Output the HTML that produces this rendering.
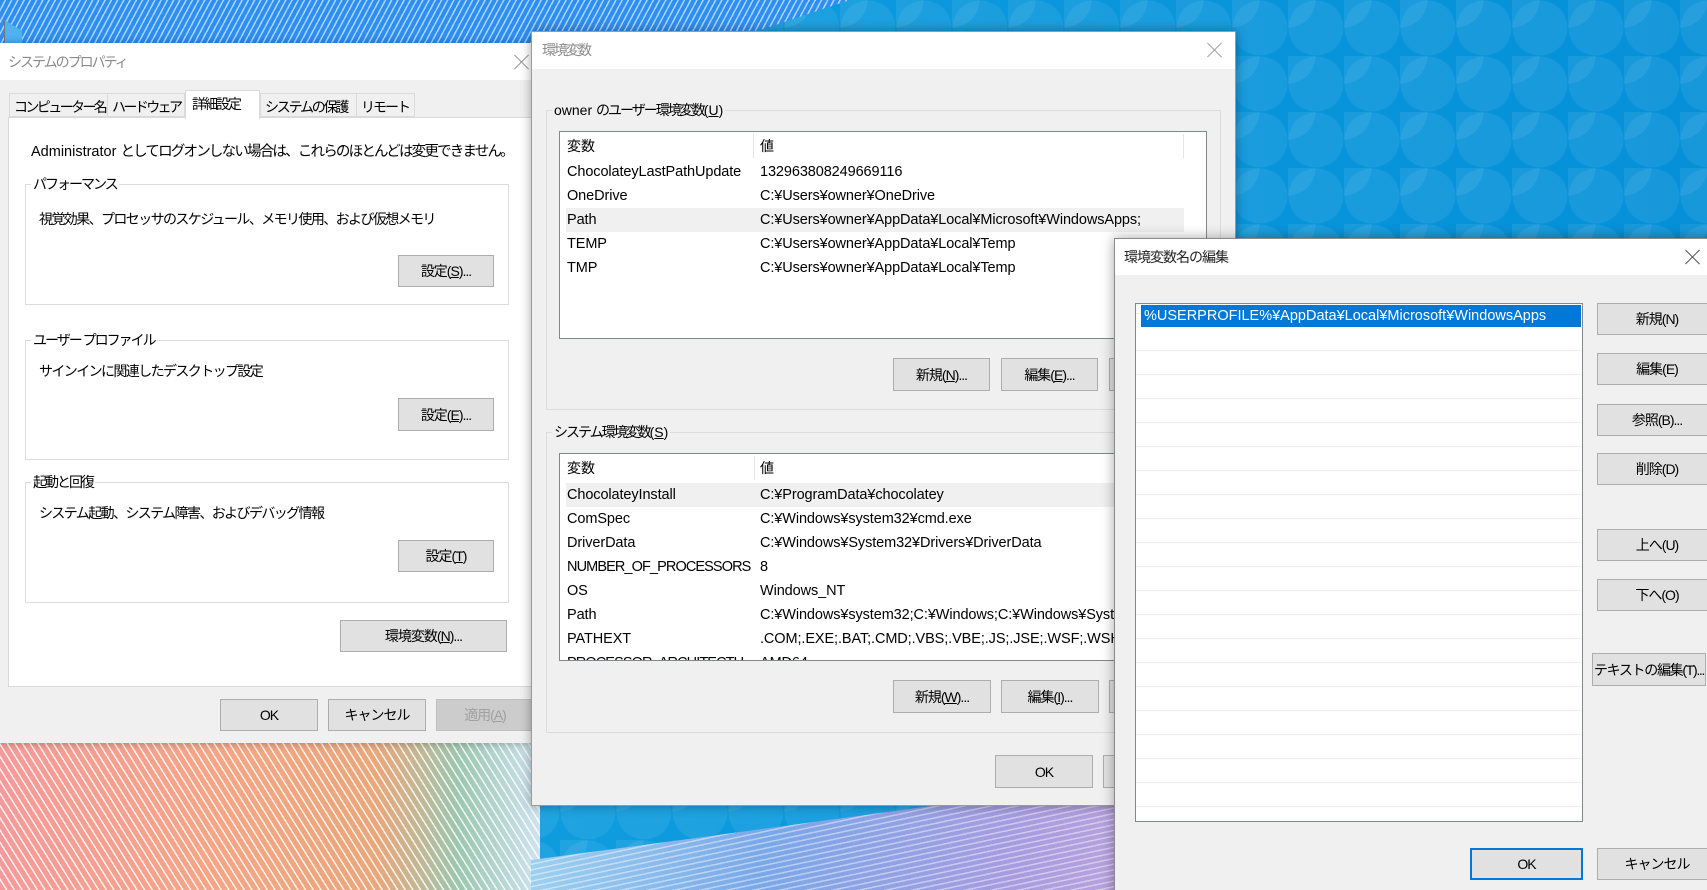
<!DOCTYPE html>
<html><head><meta charset="utf-8">
<style>
*{box-sizing:border-box;margin:0;padding:0}
html,body{width:1707px;height:890px;overflow:hidden}
body{position:relative;background:#139fe0;font-family:"Liberation Sans","Noto Sans CJK JP",sans-serif;font-size:14px;color:#000}
.a{position:absolute;white-space:nowrap}
.j{letter-spacing:-2px}
.btn{position:absolute;background:#e1e1e1;border:1px solid #adadad;display:flex;align-items:center;justify-content:center;font-size:14px;white-space:nowrap}
.btn span{letter-spacing:-1px}
.grp{position:absolute;border:1px solid #dcdcdc}
.lbl{position:absolute;padding:0 2px;line-height:18px}
.row{position:absolute;height:24px;line-height:24px;font-size:14.5px;letter-spacing:-.1px}
.x{position:absolute;width:16px;height:16px}
.x:before,.x:after{content:"";position:absolute;left:7px;top:-2px;width:1.2px;height:20px;background:#555}
.x:before{transform:rotate(45deg)}.x:after{transform:rotate(-45deg)}
</style></head><body>
<div class="a" style="left:0;top:0;width:1707px;height:890px;background:radial-gradient(circle at 28px 28px,rgba(255,255,255,.07) 0 27px,transparent 28px),radial-gradient(circle at 0 0,rgba(255,255,255,.07) 0 27px,transparent 28px),linear-gradient(90deg,#12a2e2,#0590d8);background-size:56px 56px,56px 56px,auto"></div>
<div class="a" style="left:0;top:0;width:900px;height:50px;clip-path:polygon(0 0,850px 0,700px 50px,0 50px);background:repeating-linear-gradient(-62deg,#2f8ff0 0 4px,#a8d4ff 4px 5.5px)"></div>
<div class="a" style="left:4px;top:20px;width:18px;height:24px;background:#4fb3f2;border-left:1px solid #777;clip-path:polygon(0 0,100% 45%,100% 100%,0 100%)"></div>
<div class="a" style="left:0;top:740px;width:540px;height:150px;background:repeating-linear-gradient(58deg,transparent 0 5px,rgba(255,255,255,.85) 5px 6.5px),linear-gradient(90deg,#f59a9a,#f5a585 40%,#e9a77a 70%,#9cc7b0 85%,#cfe3f0)"></div>
<div class="a" style="left:531px;top:800px;width:590px;height:90px;background:repeating-linear-gradient(-12deg,transparent 0 4px,rgba(255,255,255,.45) 4px 5.5px),linear-gradient(100deg,#9fd2f0,#7aa8e8 40%,#a69ce0 80%,#b8a2dc);clip-path:polygon(0 60px,150px 40px,400px 6px,590px 0,590px 90px,0 90px)"></div>

<div class="a" style="left:0;top:43px;width:535px;height:700px;background:#f0f0f0;box-shadow:0 0 8px rgba(0,0,0,.3)">
 <div class="a" style="left:0;top:0;width:535px;height:37px;background:#fff"></div>
 <div class="a j" style="left:8px;top:9px;color:#8a8a8a">システムのプロパティ</div>
 <div class="x" style="left:514px;top:11px;opacity:.6"></div>
 <div class="a j" style="left:9px;top:50px;width:99px;height:24px;border:1px solid #dadada;background:#f0f0f0;padding:3px 4px;letter-spacing:-2.6px">コンピューター名</div>
 <div class="a j" style="left:108px;top:50px;width:77px;height:24px;border:1px solid #dadada;border-left:0;background:#f0f0f0;padding:3px 4px;letter-spacing:-2.6px">ハードウェア</div>
 <div class="a j" style="left:260px;top:50px;width:97px;height:24px;border:1px solid #dadada;background:#f0f0f0;padding:3px 4px;letter-spacing:-2.2px">システムの保護</div>
 <div class="a j" style="left:357px;top:50px;width:58px;height:24px;border:1px solid #dadada;border-left:0;background:#f0f0f0;padding:3px 4px">リモート</div>
 <div class="a" style="left:8px;top:74px;width:540px;height:570px;background:#fff;border:1px solid #dadada"></div>
 <div class="a j" style="left:185px;top:47px;width:75px;height:29px;border:1px solid #dadada;border-bottom:0;background:#fff;padding:3px 6px">詳細設定</div>
 <div class="a" style="left:31px;top:97px;font-size:14.5px">Administrator <span style="letter-spacing:-1.8px">としてログオンしない場合は、これらのほとんどは変更できません。</span></div>
 <div class="grp" style="left:25px;top:141px;width:484px;height:121px"></div>
 <div class="lbl j" style="left:31px;top:132px;background:#fff">パフォーマンス</div>
 <div class="a j" style="left:39px;top:166px;letter-spacing:-1.6px">視覚効果、プロセッサのスケジュール、メモリ使用、および仮想メモリ</div>
 <div class="btn" style="left:398px;top:212px;width:96px;height:32px"><span>設定(<u>S</u>)...</span></div>
 <div class="grp" style="left:25px;top:297px;width:484px;height:120px"></div>
 <div class="lbl j" style="left:31px;top:288px;background:#fff">ユーザー プロファイル</div>
 <div class="a j" style="left:39px;top:318px;letter-spacing:-1.6px">サインインに関連したデスクトップ設定</div>
 <div class="btn" style="left:398px;top:355px;width:96px;height:33px"><span>設定(<u>E</u>)...</span></div>
 <div class="grp" style="left:25px;top:439px;width:484px;height:121px"></div>
 <div class="lbl j" style="left:31px;top:430px;background:#fff">起動と回復</div>
 <div class="a j" style="left:39px;top:460px;letter-spacing:-1.6px">システム起動、システム障害、およびデバッグ情報</div>
 <div class="btn" style="left:398px;top:497px;width:96px;height:32px"><span>設定(<u>T</u>)</span></div>
 <div class="btn" style="left:340px;top:577px;width:167px;height:32px"><span>環境変数(<u>N</u>)...</span></div>
 <div class="btn" style="left:220px;top:656px;width:98px;height:32px"><span>OK</span></div>
 <div class="btn" style="left:328px;top:656px;width:98px;height:32px"><span>キャンセル</span></div>
 <div class="btn" style="left:436px;top:656px;width:98px;height:32px;background:#cccccc;border-color:#bfbfbf;color:#a0a0a0"><span>適用(<u>A</u>)</span></div>
</div>

<div class="a" style="left:531px;top:31px;width:705px;height:775px;background:#f0f0f0;border:1px solid #9a9a9a;box-shadow:0 0 10px rgba(0,0,0,.35)">
 <div class="a" style="left:0;top:0;width:703px;height:37px;background:#fff"></div>
 <div class="a j" style="left:10px;top:8px;color:#8a8a8a">環境変数</div>
 <div class="x" style="left:675px;top:10px;opacity:.55"></div>
 <div class="grp" style="left:14px;top:78px;width:675px;height:300px"></div>
 <div class="lbl" style="left:20px;top:69px;background:#f0f0f0">owner <span class="j">のユーザー環境変数</span>(<u>U</u>)</div>
 <div class="a" style="left:27px;top:99px;width:648px;height:208px;background:#fff;border:1px solid #828790"></div>
 <div class="a" style="left:221px;top:102px;width:1px;height:24px;background:#e5e5e5"></div>
 <div class="a" style="left:651px;top:102px;width:1px;height:24px;background:#e5e5e5"></div>
 <div class="a" style="left:35px;top:104px">変数</div>
 <div class="a" style="left:228px;top:104px">値</div>
 <div class="a" style="left:34px;top:176px;width:618px;height:24px;background:#f0f0f0"></div>
 <div class="row" style="left:35px;top:128px">ChocolateyLastPathUpdate</div><div class="row" style="left:228px;top:128px">132963808249669116</div>
 <div class="row" style="left:35px;top:152px">OneDrive</div><div class="row" style="left:228px;top:152px">C:¥Users¥owner¥OneDrive</div>
 <div class="row" style="left:35px;top:176px">Path</div><div class="row" style="left:228px;top:176px">C:¥Users¥owner¥AppData¥Local¥Microsoft¥WindowsApps;</div>
 <div class="row" style="left:35px;top:200px">TEMP</div><div class="row" style="left:228px;top:200px">C:¥Users¥owner¥AppData¥Local¥Temp</div>
 <div class="row" style="left:35px;top:224px">TMP</div><div class="row" style="left:228px;top:224px">C:¥Users¥owner¥AppData¥Local¥Temp</div>
 <div class="btn" style="left:361px;top:326px;width:97px;height:33px"><span>新規(<u>N</u>)...</span></div>
 <div class="btn" style="left:469px;top:326px;width:97px;height:33px"><span>編集(<u>E</u>)...</span></div>
 <div class="btn" style="left:577px;top:326px;width:97px;height:33px"></div>

 <div class="grp" style="left:14px;top:400px;width:675px;height:301px"></div>
 <div class="lbl" style="left:20px;top:391px;background:#f0f0f0"><span class="j">システム環境変数</span>(<u>S</u>)</div>
 <div class="a" style="left:27px;top:421px;width:648px;height:208px;background:#fff;border:1px solid #828790;overflow:hidden">
  <div class="a" style="left:194px;top:2px;width:1px;height:24px;background:#e5e5e5"></div>
  <div class="a" style="left:7px;top:4px">変数</div>
  <div class="a" style="left:200px;top:4px">値</div>
  <div class="a" style="left:6px;top:29px;width:640px;height:24px;background:#f0f0f0"></div>
  <div class="row" style="left:7px;top:29px">ChocolateyInstall</div><div class="row" style="left:200px;top:29px">C:¥ProgramData¥chocolatey</div>
  <div class="row" style="left:7px;top:53px">ComSpec</div><div class="row" style="left:200px;top:53px">C:¥Windows¥system32¥cmd.exe</div>
  <div class="row" style="left:7px;top:77px">DriverData</div><div class="row" style="left:200px;top:77px">C:¥Windows¥System32¥Drivers¥DriverData</div>
  <div class="row" style="left:7px;top:101px;letter-spacing:-.9px">NUMBER_OF_PROCESSORS</div><div class="row" style="left:200px;top:101px">8</div>
  <div class="row" style="left:7px;top:125px">OS</div><div class="row" style="left:200px;top:125px">Windows_NT</div>
  <div class="row" style="left:7px;top:149px">Path</div><div class="row" style="left:200px;top:149px">C:¥Windows¥system32;C:¥Windows;C:¥Windows¥System32¥Wbem</div>
  <div class="row" style="left:7px;top:173px">PATHEXT</div><div class="row" style="left:200px;top:173px">.COM;.EXE;.BAT;.CMD;.VBS;.VBE;.JS;.JSE;.WSF;.WSH;.MSC</div>
  <div class="row" style="left:7px;top:197px;letter-spacing:-.9px">PROCESSOR_ARCHITECTU</div><div class="row" style="left:200px;top:197px">AMD64</div>
 </div>
 <div class="btn" style="left:361px;top:648px;width:98px;height:33px"><span>新規(<u>W</u>)...</span></div>
 <div class="btn" style="left:469px;top:648px;width:98px;height:33px"><span>編集(<u>I</u>)...</span></div>
 <div class="btn" style="left:577px;top:648px;width:98px;height:33px"></div>
 <div class="btn" style="left:463px;top:723px;width:98px;height:33px"><span>OK</span></div>
 <div class="btn" style="left:571px;top:723px;width:98px;height:33px"></div>
</div>

<div class="a" style="left:1114px;top:238px;width:600px;height:660px;background:#f0f0f0;border-left:1px solid #8a8a8a;border-top:1px solid #8a8a8a;box-shadow:0 0 12px rgba(0,0,0,.35)">
 <div class="a" style="left:0;top:0;width:600px;height:36px;background:#fff"></div>
 <div class="a j" style="left:9px;top:8px;color:#222;letter-spacing:-1px">環境変数名の編集</div>
 <div class="x" style="left:570px;top:10px"></div>
 <div class="a" style="left:20px;top:64px;width:448px;height:519px;background:#fff;border:1px solid #828790;background-image:repeating-linear-gradient(180deg,transparent 0 23px,#ececec 23px 24px);background-position:0 23px;background-repeat:repeat-y"></div>
 <div class="a" style="left:26px;top:66px;width:440px;height:22px;background:#0078d7;color:#fff;line-height:22px;padding-left:3px;font-size:14.5px">%USERPROFILE%¥AppData¥Local¥Microsoft¥WindowsApps</div>
 <div class="btn" style="left:482px;top:64px;width:120px;height:32px"><span>新規(N)</span></div>
 <div class="btn" style="left:482px;top:114px;width:120px;height:32px"><span>編集(E)</span></div>
 <div class="btn" style="left:482px;top:165px;width:120px;height:32px"><span>参照(B)...</span></div>
 <div class="btn" style="left:482px;top:214px;width:120px;height:32px"><span>削除(D)</span></div>
 <div class="btn" style="left:482px;top:290px;width:120px;height:32px"><span>上へ(U)</span></div>
 <div class="btn" style="left:482px;top:340px;width:120px;height:32px"><span>下へ(O)</span></div>
 <div class="btn" style="left:477px;top:414px;width:114px;height:33px"><span style="letter-spacing:-1.3px">テキストの編集(T)...</span></div>
 <div class="btn" style="left:355px;top:609px;width:113px;height:32px;border:2px solid #0078d7"><span>OK</span></div>
 <div class="btn" style="left:482px;top:609px;width:120px;height:32px"><span>キャンセル</span></div>
</div>
</body></html>
